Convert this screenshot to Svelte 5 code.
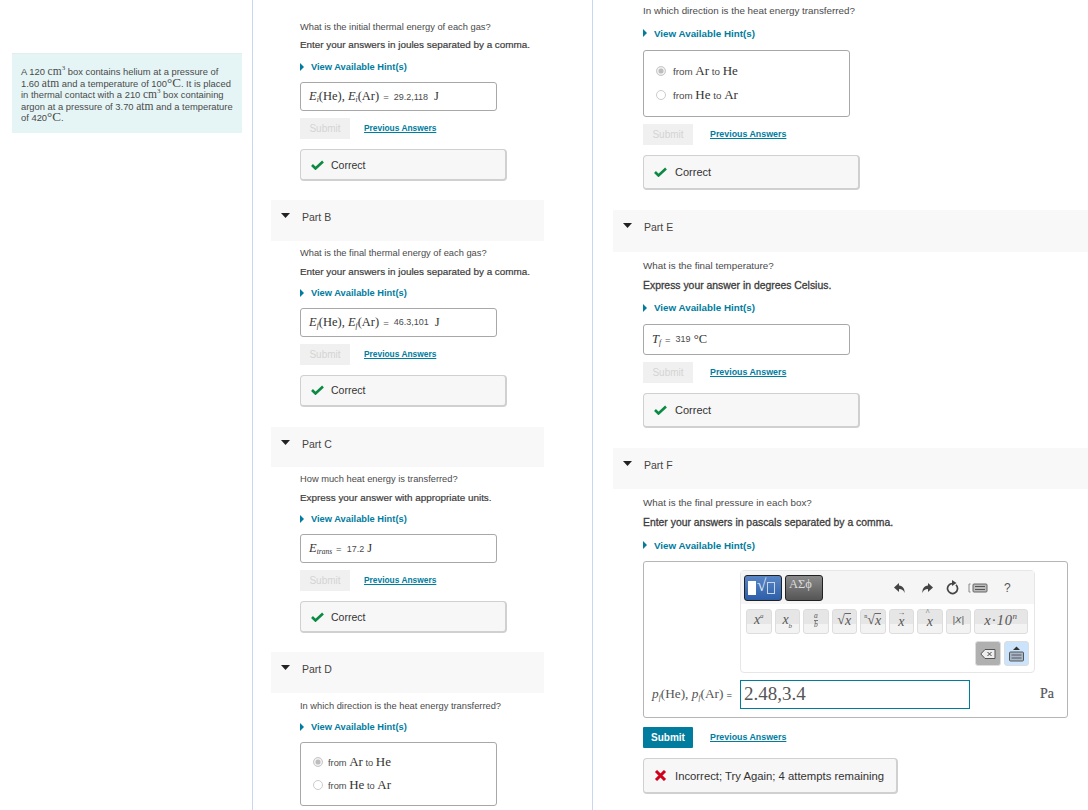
<script lang="ts">
	const radios = [
		{ a: 'Ar', b: 'He', on: true },
		{ a: 'He', b: 'Ar', on: false }
	];
	const tools = ['sup', 'sub', 'frac', 'sqrt', 'root', 'vec', 'hat', 'abs'];
</script>

{#snippet partHead(name)}
	<div class="part-head">
		<svg class="caret" width="9" height="5" viewBox="0 0 9 5"><path d="M0 0h9L4.500 5z" fill="#222" /></svg>
		<span>{name}</span>
	</div>
{/snippet}

{#snippet hint()}
	<div class="hint">
		<svg width="4" height="8" viewBox="0 0 4 8"><path d="M0 0l4 4-4 4z" fill="#007c9e" /></svg>
		<span>View Available Hint(s)</span>
	</div>
{/snippet}

{#snippet actions(active = false)}
	<div class="actions">
		<span class="submit" class:active>Submit</span>
		<span class="prev">Previous Answers</span>
	</div>
{/snippet}

{#snippet correct()}
	<div class="feedback">
		<svg width="13" height="10" viewBox="0 0 13 10"><path d="M1 5l3.500 3.500L12 1.500" fill="none" stroke="#0b8a43" stroke-width="2.600" /></svg>
		<span>Correct</span>
	</div>
{/snippet}

{#snippet direction()}
	<div class="answer radios">
		{#each radios as r}
			<div class="radio-row">
				<span class="radio" class:on={r.on}></span>
				<span>from <i class="m">{r.a}</i> to <i class="m">{r.b}</i></span>
			</div>
		{/each}
	</div>
{/snippet}

<div class="page">
	<aside class="left">
		<div class="problem">
			A 120 <b class="m">cm<sup>3</sup></b> box contains helium at a pressure of<br />
			1.60 <b class="m">atm</b> and a temperature of 100<b class="m big">°C</b>. It is placed<br />
			in thermal contact with a 210 <b class="m">cm<sup>3</sup></b> box containing<br />
			argon at a pressure of 3.70 <b class="m">atm</b> and a temperature<br />
			of 420<b class="m big">°C</b>.
		</div>
	</aside>

	<main class="col mid">
		<section class="body first">
			<p class="q">What is the initial thermal energy of each gas?</p>
			<p class="ins">Enter your answers in joules separated by a comma.</p>
			{@render hint()}
			<div class="answer line">
				<span class="m"><em>E<sub>i</sub></em>(He), <em>E<sub>i</sub></em>(Ar)</span><span class="eq">=</span>
				<span class="val">29.2,118</span><span class="m unit">J</span>
			</div>
			{@render actions()}
			{@render correct()}
		</section>

		{@render partHead('Part B')}
		<section class="body">
			<p class="q">What is the final thermal energy of each gas?</p>
			<p class="ins">Enter your answers in joules separated by a comma.</p>
			{@render hint()}
			<div class="answer line">
				<span class="m"><em>E<sub>f</sub></em>(He), <em>E<sub>f</sub></em>(Ar)</span><span class="eq">=</span>
				<span class="val">46.3,101</span><span class="m unit">J</span>
			</div>
			{@render actions()}
			{@render correct()}
		</section>

		{@render partHead('Part C')}
		<section class="body part-c">
			<p class="q">How much heat energy is transferred?</p>
			<p class="ins">Express your answer with appropriate units.</p>
			{@render hint()}
			<div class="answer line">
				<span class="m"><em>E<sub>trans</sub></em></span><span class="eq">=</span>
				<span class="val">17.2</span><span class="m unit tight">J</span>
			</div>
			{@render actions()}
			{@render correct()}
		</section>

		{@render partHead('Part D')}
		<section class="body part-d">
			<p class="q">In which direction is the heat energy transferred?</p>
			{@render hint()}
			{@render direction()}
		</section>
	</main>

	<main class="col right">
		<section class="body top">
			<p class="q">In which direction is the heat energy transferred?</p>
			{@render hint()}
			{@render direction()}
			{@render actions()}
			<div class="tall">{@render correct()}</div>
		</section>

		{@render partHead('Part E')}
		<section class="body">
			<p class="q">What is the final temperature?</p>
			<p class="ins">Express your answer in degrees Celsius.</p>
			{@render hint()}
			<div class="answer line">
				<span class="m"><em>T<sub>f</sub></em></span><span class="eq">=</span>
				<span class="val">319</span><span class="m unit tight">°C</span>
			</div>
			{@render actions()}
			<div class="tall">{@render correct()}</div>
		</section>

		{@render partHead('Part F')}
		<section class="body">
			<p class="q">What is the final pressure in each box?</p>
			<p class="ins">Enter your answers in pascals separated by a comma.</p>
			{@render hint()}
			<div class="math-panel">
				<div class="keyboard">
					<div class="kb-top">
						<span class="mode blue">
							<span class="cursor"></span><span class="radical">√</span><span class="hole"></span>
						</span>
						<span class="mode grey">ΑΣϕ</span>
						<span class="kb-icons">
							<svg width="16" height="14" viewBox="0 0 16 14"><path d="M7 2L2 6.500 7 11V8c3 0 4.500 1 5.500 4 .5-4-1.500-7-5.500-7.500z" fill="#444" /></svg>
							<svg width="16" height="14" viewBox="0 0 16 14"><path d="M9 2l5 4.500L9 11V8c-3 0-4.500 1-5.500 4-.5-4 1.500-7 5.500-7.500z" fill="#444" /></svg>
							<svg width="14" height="15" viewBox="0 0 14 15"><path d="M6.500 3.500a5 5 0 1 0 3.500 1.400" fill="none" stroke="#444" stroke-width="1.700" /><path d="M6 0l4.500 3L6 6z" fill="#444" /></svg>
							<svg width="20" height="10" viewBox="0 0 20 10"><path d="M2.500 1H1v8h1.500" fill="none" stroke="#888" /><rect x="5" y="1" width="14" height="8" rx="1" fill="#bbb" stroke="#666" /><path d="M7 3.500h10M7 6.500h10" stroke="#555" /></svg>
							<span class="help">?</span>
						</span>
					</div>
					<div class="kb-row">
						{#each tools as t}
							<span class="tool">
								{#if t === 'sup'}<i>x<sup>a</sup></i>
								{:else if t === 'sub'}<i>x<sub>b</sub></i>
								{:else if t === 'frac'}<i class="frac"><span>a</span><span>b</span></i>
								{:else if t === 'sqrt'}√<i class="over">x</i>
								{:else if t === 'root'}<sup class="idx">n</sup>√<i class="over">x</i>
								{:else if t === 'vec'}<i class="accent" data-mark="→">x</i>
								{:else if t === 'hat'}<i class="accent" data-mark="^">x</i>
								{:else}<i class="small">|X|</i>
								{/if}
							</span>
						{/each}
						<span class="tool wide"><i>x</i>·<i>10<sup>n</sup></i></span>
					</div>
					<div class="kb-row end">
						<span class="tool del">
							<svg width="16" height="10" viewBox="0 0 16 10"><path d="M5 .5h10v9H5L.8 5z" fill="#eee" stroke="#555" /><path d="M7.500 3l4 4m0-4l-4 4" stroke="#444" /></svg>
						</span>
						<span class="tool kbtoggle">
							<svg width="15" height="16" viewBox="0 0 15 16"><path d="M4 4l3.500-3.500L11 4z" fill="#333" /><rect x=".5" y="6" width="14" height="9" rx="1" fill="#a9b8c6" stroke="#555" /><path d="M2.500 9h10M2.500 12h10" stroke="#556" /></svg>
						</span>
					</div>
				</div>
				<div class="math-line">
					<span class="m label"><em>p<sub>f</sub></em>(He), <em>p<sub>f</sub></em>(Ar)<span class="eq">=</span></span>
					<span class="math-input">2.48,3.4</span>
					<span class="m pa">Pa</span>
				</div>
			</div>
			{@render actions(true)}
			<div class="feedback wrong">
				<svg width="13" height="11" viewBox="0 0 13 11"><path d="M2 1l9 9m0-9l-9 9" fill="none" stroke="#d0011b" stroke-width="3" /></svg>
				<span>Incorrect; Try Again; 4 attempts remaining</span>
			</div>
		</section>
	</main>
</div>

<style>
	:global(body) {
		background: #fff;
	}

	.page {
		display: grid;
		grid-template-columns: 252px 341px 1fr;
		width: 1088px;
		height: 810px;
		overflow: hidden;
		font-family: 'Liberation Sans', Arial, sans-serif;
		font-size: 9.5px;
		color: #4a4a4a;
	}

	.left {
		padding: 53px 10px 0 12px;
	}

	.problem {
		height: 80px;
		box-sizing: border-box;
		padding: 12px 9px 0;
		background: #e5f5f6;
		border-top: 1px solid #e0eeee;
		font-size: 9.400px;
		line-height: 11.500px;
		white-space: nowrap;
	}

	.problem .m {
		font-size: 11.500px;
		line-height: 0;
	}

	.problem .big {
		font-size: 13px;
	}

	.problem sup {
		font-size: 7px;
		line-height: 0;
	}

	.m {
		font-family: 'Liberation Serif', 'Times New Roman', serif;
		font-weight: 400;
		font-style: normal;
		font-size: 11px;
	}

	.col {
		border-left: 1px solid #c7d7ee;
		min-width: 0;
	}

	.mid {
		border-right: 1px solid #c7d7ee;
		padding-left: 18px;
	}

	.right {
		border-left: 0;
		padding-left: 20px;
	}

	.part-head {
		display: flex;
		align-items: flex-start;
		height: 40.500px;
		box-sizing: border-box;
		padding: 11px 0 0 10px;
		background: #f8f8f8;
		font-size: 10.500px;
		color: #444;
		margin-right: 48px;
	}

	.right .part-head {
		height: 41.500px;
		margin-right: 0;
	}

	.caret {
		margin: 2px 12px 0 0;
	}

	.body {
		padding: 6px 0 20px 29px;
	}

	.right .body {
		padding: 8px 0 20px 30px;
	}

	.first {
		padding-top: 21px;
		padding-bottom: 19px;
	}

	.first .q {
		margin-bottom: 6px;
	}

	.first .ins {
		margin-bottom: 10px;
	}

	.part-c {
		padding-bottom: 19px;
	}

	.part-d {
		padding-top: 7px;
	}

	.right .top {
		padding-top: 5px;
	}

	p {
		margin: 0;
		height: 12px;
		line-height: 12px;
		white-space: nowrap;
	}

	.q {
		font-size: 9.300px;
		margin-bottom: 7px;
	}

	.right .q {
		font-size: 9.800px;
		margin-bottom: 8px;
	}

	.ins {
		font-size: 9.900px;
		color: #3c3c3c;
		-webkit-text-stroke: 0.200px #3c3c3c;
		margin-bottom: 9px;
	}

	.right .ins {
		font-size: 10.400px;
		margin-bottom: 10px;
		-webkit-text-stroke: 0.300px #3c3c3c;
	}

	.hint {
		display: flex;
		align-items: center;
		gap: 7px;
		height: 12px;
		font-size: 9.300px;
		color: #007c9e;
		font-weight: 700;
		margin-bottom: 9px;
	}

	.right .hint {
		font-size: 9.800px;
		margin-bottom: 10px;
	}

	.q + .hint {
		margin-top: 9px;
	}

	.right .q + .hint {
		margin-top: 10px;
	}

	.right .top .hint {
		margin-bottom: 11px;
	}

	.answer {
		box-sizing: border-box;
		width: 197px;
		background: #fff;
		border: 1px solid #a8a8a8;
		border-radius: 3px;
	}

	.right .answer {
		width: 207px;
	}

	.line {
		display: flex;
		align-items: center;
		height: 29px;
		padding-left: 8px;
		white-space: nowrap;
	}

	.right .line {
		height: 31px;
	}

	.line .m {
		font-size: 12.500px;
		color: #333;
	}

	.line sub,
	.label sub {
		font-size: 7.500px;
		line-height: 0;
		vertical-align: -2px;
	}

	.eq {
		margin: 0 5px 0 4px;
		font-family: 'Liberation Sans', Arial, sans-serif;
		font-size: 9.500px;
	}

	.val {
		font-size: 9px;
	}

	.line .unit {
		margin-left: 6px;
		font-weight: 400;
	}

	.line .tight {
		margin-left: 3px;
	}

	.radios {
		height: 64px;
		padding: 8px 0 0 12px;
		margin-bottom: 7px;
		font-size: 9.300px;
	}

	.right .radios {
		height: 67px;
		font-size: 9.800px;
	}

	.radio-row {
		display: flex;
		align-items: center;
		gap: 5px;
		height: 23px;
	}

	.right .radio-row {
		gap: 7px;
		height: 24px;
	}

	.radio-row .m {
		font-size: 13px;
		color: #333;
	}

	.radio {
		box-sizing: border-box;
		width: 10px;
		height: 10px;
		border-radius: 50%;
		border: 1px solid #ccc;
		background: #fff;
	}

	.radio.on {
		background: #bdbdbd;
		box-shadow: inset 0 0 0 1.500px #f2f2f2;
	}

	.actions {
		display: flex;
		align-items: center;
		gap: 14px;
		margin: 7px 0 10px;
	}

	.right .actions {
		gap: 17px;
	}

	.submit {
		display: flex;
		align-items: center;
		justify-content: center;
		width: 50px;
		height: 21px;
		background: #f0f0f0;
		color: #d4d4d4;
		font-size: 10px;
	}

	.submit.active {
		background: #007c9e;
		color: #fff;
		font-weight: 700;
		border-radius: 1px;
	}

	.prev {
		margin-top: -1px;
		font-size: 8.400px;
		font-weight: 700;
		color: #007c9e;
		text-decoration: underline;
	}

	.right .prev {
		font-size: 8.850px;
	}

	.feedback {
		display: flex;
		align-items: center;
		gap: 7px;
		box-sizing: border-box;
		width: 207px;
		height: 32px;
		padding-left: 10px;
		background: #f7f7f7;
		border: 1px solid #d0d0d0;
		border-bottom-width: 2px;
		border-right-width: 2px;
		border-radius: 4px;
		font-size: 10.500px;
		color: #333;
	}

	.right .feedback {
		gap: 8px;
		width: 217px;
		height: 35px;
		font-size: 11px;
	}

	.right .feedback.wrong {
		width: 255px;
		height: 36px;
		font-size: 11.300px;
	}

	.tall {
		margin-top: 10px;
	}

	.math-panel {
		box-sizing: border-box;
		width: 425px;
		height: 157px;
		margin-bottom: 9px;
		padding-top: 8px;
		border: 1px solid #b5b5b5;
		border-radius: 3px;
	}

	.keyboard {
		box-sizing: border-box;
		width: 295px;
		height: 103px;
		margin-left: 96px;
		border: 1px solid #e6e6e6;
		border-radius: 4px;
	}

	.kb-top {
		display: flex;
		align-items: center;
		gap: 3px;
		height: 33px;
		padding: 0 0 0 3px;
		background: #f5f5f5;
	}

	.mode {
		display: flex;
		align-items: center;
		box-sizing: border-box;
		width: 38px;
		height: 26px;
		border: 1px solid #222;
		border-radius: 3px;
		font-family: 'Liberation Serif', serif;
	}

	.blue {
		background: linear-gradient(#5a86c4, #2c5ea8);
		gap: 1px;
		padding-left: 3px;
	}

	.cursor {
		width: 8px;
		height: 14px;
		background: #fff;
	}

	.radical {
		color: #dfe8f5;
		font-size: 17px;
		line-height: 1;
		margin-top: -4px;
	}

	.hole {
		width: 8px;
		height: 12px;
		box-sizing: border-box;
		border: 1px solid #c8d6ea;
	}

	.grey {
		background: linear-gradient(#8a8a8a, #555);
		color: #ddd;
		font-size: 12.500px;
		padding: 0 0 6px 3px;
	}

	.kb-icons {
		display: flex;
		align-items: center;
		gap: 11px;
		margin-left: 66px;
	}

	.kb-icons svg:nth-child(4) {
		margin-left: -3px;
	}

	.help {
		margin-left: 5px;
		font-size: 12px;
		color: #555;
	}

	.kb-row {
		display: flex;
		gap: 3px;
		padding: 5px 0 0 5px;
	}

	.end {
		justify-content: flex-end;
		padding: 7px 5px 0 0;
	}

	.tool {
		display: flex;
		align-items: flex-start;
		justify-content: center;
		box-sizing: border-box;
		width: 25.500px;
		height: 25px;
		padding-top: 2px;
		border: 1px solid #ddd;
		border-radius: 3px;
		background: linear-gradient(#e6e6e6 0 60%, #f3f3f3 60%);
		font-family: 'Liberation Serif', serif;
		font-size: 14px;
		color: #555;
		white-space: nowrap;
	}

	.tool sup,
	.tool sub {
		font-size: 7px;
		line-height: 0;
	}

	.frac {
		display: flex;
		flex-direction: column;
		align-items: center;
		font-size: 7.500px;
		line-height: 8px;
	}

	.frac span:first-child {
		border-bottom: 1px solid #777;
	}

	.over {
		border-top: 1px solid #666;
		line-height: 13px;
		margin-top: 1px;
	}

	.tool .idx {
		font-size: 6px;
		line-height: 8px;
	}

	.accent {
		position: relative;
		margin-top: 2px;
	}

	.accent::before {
		content: attr(data-mark);
		position: absolute;
		left: -1px;
		top: -6px;
		font-size: 8px;
		font-style: normal;
	}

	.small {
		font-size: 9.500px;
		font-family: 'Liberation Sans', sans-serif;
		padding-top: 2px;
	}

	.wide {
		width: 54px;
		font-size: 14.500px;
		letter-spacing: 0.600px;
	}

	.wide sup {
		font-size: 9px;
	}

	.del {
		align-items: center;
		padding: 0;
		background: #b0b0b0;
	}

	.kbtoggle {
		align-items: center;
		padding: 0;
		background: #cbe3fb;
	}

	.math-line {
		display: flex;
		align-items: center;
		height: 30px;
		margin-top: 6px;
		padding-left: 8px;
	}

	.label {
		width: 88px;
		font-size: 13.300px;
		white-space: nowrap;
		color: #555;
	}

	.label .eq {
		margin: 0 0 0 3px;
		color: #333;
	}

	.math-input {
		display: flex;
		align-items: center;
		box-sizing: border-box;
		width: 230px;
		height: 29px;
		padding-left: 3px;
		border: 1px solid #007c9e;
		font-family: 'Liberation Serif', serif;
		font-size: 19px;
		color: #555;
	}

	.pa {
		margin-left: 70px;
		font-size: 14px;
		color: #555;
		-webkit-text-stroke: 0.200px #555;
	}
</style>
